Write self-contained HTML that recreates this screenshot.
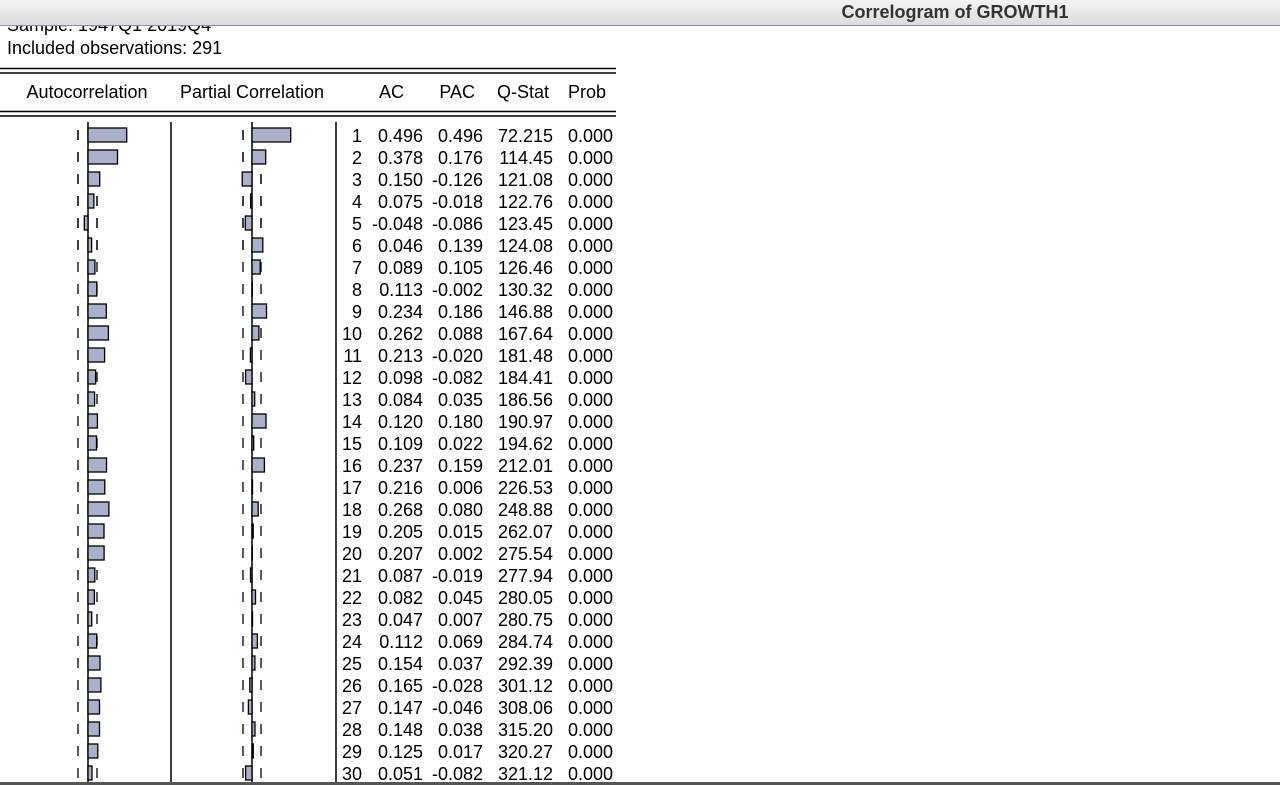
<!DOCTYPE html>
<html><head><meta charset="utf-8"><style>
html,body{margin:0;padding:0;background:#fff;width:1280px;height:785px;overflow:hidden}
svg{position:absolute;left:0;top:0}
text{font-family:"Liberation Sans",Arial,sans-serif;font-size:18px;fill:#000}
.r{text-anchor:end}
.b{fill:#aab0c9;stroke:#000;stroke-width:1.3}
</style></head><body>
<svg width="1280" height="785" viewBox="0 0 1280 785">
<defs><linearGradient id="g" x1="0" y1="0" x2="0" y2="1"><stop offset="0" stop-color="#f3f3f3"/><stop offset="1" stop-color="#dcdcdc"/></linearGradient></defs>
<text x="7" y="31">Sample: 1947Q1 2019Q4</text>
<rect x="0" y="0" width="1280" height="25" fill="url(#g)"/>
<rect x="0" y="25" width="1280" height="1" fill="#8e8ea8"/>
<text x="955" y="18" text-anchor="middle" style="font-weight:bold;fill:#333">Correlogram of GROWTH1</text>
<text x="7" y="54">Included observations: 291</text>
<g stroke="#000" stroke-width="1.5">
<line x1="0" y1="68.5" x2="616" y2="68.5"/><line x1="0" y1="73" x2="616" y2="73"/>
<line x1="0" y1="111.5" x2="616" y2="111.5"/><line x1="0" y1="116" x2="616" y2="116"/>
<line x1="88" y1="122" x2="88" y2="782"/><line x1="171" y1="122" x2="171" y2="782"/>
<line x1="252" y1="122" x2="252" y2="782"/><line x1="336" y1="122" x2="336" y2="782"/>
</g>
<text x="87" y="98" text-anchor="middle">Autocorrelation</text>
<text x="252" y="98" text-anchor="middle">Partial Correlation</text>
<text x="404" y="98" class="r">AC</text>
<text x="475" y="98" class="r">PAC</text>
<text x="549" y="98" class="r">Q-Stat</text>
<text x="606" y="98" class="r">Prob</text>
<g stroke="#000" stroke-width="1.3" id="ticks">
<path d="M78 130v10M97 130v10M243 130v10M261 130v10"/>
</g>
<g id="t2"><use href="#ticks" y="22"/><use href="#ticks" y="44"/><use href="#ticks" y="66"/><use href="#ticks" y="88"/><use href="#ticks" y="110"/></g>
<g id="t3"><use href="#ticks"/><use href="#t2"/></g>
<use href="#t3" y="132"/><use href="#t3" y="264"/><use href="#t3" y="396"/><use href="#t3" y="528"/>
<use href="#ticks" y="660"/>
<rect class="b" x="88" y="128" width="38.7" height="14"/>
<rect class="b" x="88" y="150" width="29.5" height="14"/>
<rect class="b" x="88" y="172" width="11.7" height="14"/>
<rect class="b" x="88" y="194" width="5.9" height="14"/>
<rect class="b" x="84.3" y="216" width="3.7" height="14"/>
<rect class="b" x="88" y="238" width="3.6" height="14"/>
<rect class="b" x="88" y="260" width="6.9" height="14"/>
<rect class="b" x="88" y="282" width="8.8" height="14"/>
<rect class="b" x="88" y="304" width="18.3" height="14"/>
<rect class="b" x="88" y="326" width="20.4" height="14"/>
<rect class="b" x="88" y="348" width="16.6" height="14"/>
<rect class="b" x="88" y="370" width="7.6" height="14"/>
<rect class="b" x="88" y="392" width="6.6" height="14"/>
<rect class="b" x="88" y="414" width="9.4" height="14"/>
<rect class="b" x="88" y="436" width="8.5" height="14"/>
<rect class="b" x="88" y="458" width="18.5" height="14"/>
<rect class="b" x="88" y="480" width="16.8" height="14"/>
<rect class="b" x="88" y="502" width="20.9" height="14"/>
<rect class="b" x="88" y="524" width="16" height="14"/>
<rect class="b" x="88" y="546" width="16.1" height="14"/>
<rect class="b" x="88" y="568" width="6.8" height="14"/>
<rect class="b" x="88" y="590" width="6.4" height="14"/>
<rect class="b" x="88" y="612" width="3.7" height="14"/>
<rect class="b" x="88" y="634" width="8.7" height="14"/>
<rect class="b" x="88" y="656" width="12" height="14"/>
<rect class="b" x="88" y="678" width="12.9" height="14"/>
<rect class="b" x="88" y="700" width="11.5" height="14"/>
<rect class="b" x="88" y="722" width="11.5" height="14"/>
<rect class="b" x="88" y="744" width="9.8" height="14"/>
<rect class="b" x="88" y="766" width="4" height="14"/>
<rect class="b" x="252" y="128" width="38.7" height="14"/>
<rect class="b" x="252" y="150" width="13.7" height="14"/>
<rect class="b" x="242.2" y="172" width="9.8" height="14"/>
<rect class="b" x="250.6" y="194" width="1.4" height="14"/>
<rect class="b" x="245.3" y="216" width="6.7" height="14"/>
<rect class="b" x="252" y="238" width="10.8" height="14"/>
<rect class="b" x="252" y="260" width="8.2" height="14"/>
<rect class="b" x="252" y="282" width="0.3" height="14"/>
<rect class="b" x="252" y="304" width="14.5" height="14"/>
<rect class="b" x="252" y="326" width="6.9" height="14"/>
<rect class="b" x="250.4" y="348" width="1.6" height="14"/>
<rect class="b" x="245.6" y="370" width="6.4" height="14"/>
<rect class="b" x="252" y="392" width="2.7" height="14"/>
<rect class="b" x="252" y="414" width="14" height="14"/>
<rect class="b" x="252" y="436" width="1.7" height="14"/>
<rect class="b" x="252" y="458" width="12.4" height="14"/>
<rect class="b" x="252" y="480" width="0.5" height="14"/>
<rect class="b" x="252" y="502" width="6.2" height="14"/>
<rect class="b" x="252" y="524" width="1.2" height="14"/>
<rect class="b" x="252" y="546" width="0.3" height="14"/>
<rect class="b" x="250.5" y="568" width="1.5" height="14"/>
<rect class="b" x="252" y="590" width="3.5" height="14"/>
<rect class="b" x="252" y="612" width="0.5" height="14"/>
<rect class="b" x="252" y="634" width="5.4" height="14"/>
<rect class="b" x="252" y="656" width="2.9" height="14"/>
<rect class="b" x="249.8" y="678" width="2.2" height="14"/>
<rect class="b" x="248.4" y="700" width="3.6" height="14"/>
<rect class="b" x="252" y="722" width="3" height="14"/>
<rect class="b" x="252" y="744" width="1.3" height="14"/>
<rect class="b" x="245.6" y="766" width="6.4" height="14"/>
<g>
<text x="362" y="142" class="r">1</text><text x="423" y="142" class="r">0.496</text><text x="483" y="142" class="r">0.496</text><text x="553" y="142" class="r">72.215</text><text x="613" y="142" class="r">0.000</text>
<text x="362" y="164" class="r">2</text><text x="423" y="164" class="r">0.378</text><text x="483" y="164" class="r">0.176</text><text x="553" y="164" class="r">114.45</text><text x="613" y="164" class="r">0.000</text>
<text x="362" y="186" class="r">3</text><text x="423" y="186" class="r">0.150</text><text x="483" y="186" class="r">-0.126</text><text x="553" y="186" class="r">121.08</text><text x="613" y="186" class="r">0.000</text>
<text x="362" y="208" class="r">4</text><text x="423" y="208" class="r">0.075</text><text x="483" y="208" class="r">-0.018</text><text x="553" y="208" class="r">122.76</text><text x="613" y="208" class="r">0.000</text>
<text x="362" y="230" class="r">5</text><text x="423" y="230" class="r">-0.048</text><text x="483" y="230" class="r">-0.086</text><text x="553" y="230" class="r">123.45</text><text x="613" y="230" class="r">0.000</text>
<text x="362" y="252" class="r">6</text><text x="423" y="252" class="r">0.046</text><text x="483" y="252" class="r">0.139</text><text x="553" y="252" class="r">124.08</text><text x="613" y="252" class="r">0.000</text>
<text x="362" y="274" class="r">7</text><text x="423" y="274" class="r">0.089</text><text x="483" y="274" class="r">0.105</text><text x="553" y="274" class="r">126.46</text><text x="613" y="274" class="r">0.000</text>
<text x="362" y="296" class="r">8</text><text x="423" y="296" class="r">0.113</text><text x="483" y="296" class="r">-0.002</text><text x="553" y="296" class="r">130.32</text><text x="613" y="296" class="r">0.000</text>
<text x="362" y="318" class="r">9</text><text x="423" y="318" class="r">0.234</text><text x="483" y="318" class="r">0.186</text><text x="553" y="318" class="r">146.88</text><text x="613" y="318" class="r">0.000</text>
<text x="362" y="340" class="r">10</text><text x="423" y="340" class="r">0.262</text><text x="483" y="340" class="r">0.088</text><text x="553" y="340" class="r">167.64</text><text x="613" y="340" class="r">0.000</text>
<text x="362" y="362" class="r">11</text><text x="423" y="362" class="r">0.213</text><text x="483" y="362" class="r">-0.020</text><text x="553" y="362" class="r">181.48</text><text x="613" y="362" class="r">0.000</text>
<text x="362" y="384" class="r">12</text><text x="423" y="384" class="r">0.098</text><text x="483" y="384" class="r">-0.082</text><text x="553" y="384" class="r">184.41</text><text x="613" y="384" class="r">0.000</text>
<text x="362" y="406" class="r">13</text><text x="423" y="406" class="r">0.084</text><text x="483" y="406" class="r">0.035</text><text x="553" y="406" class="r">186.56</text><text x="613" y="406" class="r">0.000</text>
<text x="362" y="428" class="r">14</text><text x="423" y="428" class="r">0.120</text><text x="483" y="428" class="r">0.180</text><text x="553" y="428" class="r">190.97</text><text x="613" y="428" class="r">0.000</text>
<text x="362" y="450" class="r">15</text><text x="423" y="450" class="r">0.109</text><text x="483" y="450" class="r">0.022</text><text x="553" y="450" class="r">194.62</text><text x="613" y="450" class="r">0.000</text>
<text x="362" y="472" class="r">16</text><text x="423" y="472" class="r">0.237</text><text x="483" y="472" class="r">0.159</text><text x="553" y="472" class="r">212.01</text><text x="613" y="472" class="r">0.000</text>
<text x="362" y="494" class="r">17</text><text x="423" y="494" class="r">0.216</text><text x="483" y="494" class="r">0.006</text><text x="553" y="494" class="r">226.53</text><text x="613" y="494" class="r">0.000</text>
<text x="362" y="516" class="r">18</text><text x="423" y="516" class="r">0.268</text><text x="483" y="516" class="r">0.080</text><text x="553" y="516" class="r">248.88</text><text x="613" y="516" class="r">0.000</text>
<text x="362" y="538" class="r">19</text><text x="423" y="538" class="r">0.205</text><text x="483" y="538" class="r">0.015</text><text x="553" y="538" class="r">262.07</text><text x="613" y="538" class="r">0.000</text>
<text x="362" y="560" class="r">20</text><text x="423" y="560" class="r">0.207</text><text x="483" y="560" class="r">0.002</text><text x="553" y="560" class="r">275.54</text><text x="613" y="560" class="r">0.000</text>
<text x="362" y="582" class="r">21</text><text x="423" y="582" class="r">0.087</text><text x="483" y="582" class="r">-0.019</text><text x="553" y="582" class="r">277.94</text><text x="613" y="582" class="r">0.000</text>
<text x="362" y="604" class="r">22</text><text x="423" y="604" class="r">0.082</text><text x="483" y="604" class="r">0.045</text><text x="553" y="604" class="r">280.05</text><text x="613" y="604" class="r">0.000</text>
<text x="362" y="626" class="r">23</text><text x="423" y="626" class="r">0.047</text><text x="483" y="626" class="r">0.007</text><text x="553" y="626" class="r">280.75</text><text x="613" y="626" class="r">0.000</text>
<text x="362" y="648" class="r">24</text><text x="423" y="648" class="r">0.112</text><text x="483" y="648" class="r">0.069</text><text x="553" y="648" class="r">284.74</text><text x="613" y="648" class="r">0.000</text>
<text x="362" y="670" class="r">25</text><text x="423" y="670" class="r">0.154</text><text x="483" y="670" class="r">0.037</text><text x="553" y="670" class="r">292.39</text><text x="613" y="670" class="r">0.000</text>
<text x="362" y="692" class="r">26</text><text x="423" y="692" class="r">0.165</text><text x="483" y="692" class="r">-0.028</text><text x="553" y="692" class="r">301.12</text><text x="613" y="692" class="r">0.000</text>
<text x="362" y="714" class="r">27</text><text x="423" y="714" class="r">0.147</text><text x="483" y="714" class="r">-0.046</text><text x="553" y="714" class="r">308.06</text><text x="613" y="714" class="r">0.000</text>
<text x="362" y="736" class="r">28</text><text x="423" y="736" class="r">0.148</text><text x="483" y="736" class="r">0.038</text><text x="553" y="736" class="r">315.20</text><text x="613" y="736" class="r">0.000</text>
<text x="362" y="758" class="r">29</text><text x="423" y="758" class="r">0.125</text><text x="483" y="758" class="r">0.017</text><text x="553" y="758" class="r">320.27</text><text x="613" y="758" class="r">0.000</text>
<text x="362" y="780" class="r">30</text><text x="423" y="780" class="r">0.051</text><text x="483" y="780" class="r">-0.082</text><text x="553" y="780" class="r">321.12</text><text x="613" y="780" class="r">0.000</text>
</g>
<rect x="0" y="782" width="1280" height="3" fill="#555"/>
</svg>
</body></html>
